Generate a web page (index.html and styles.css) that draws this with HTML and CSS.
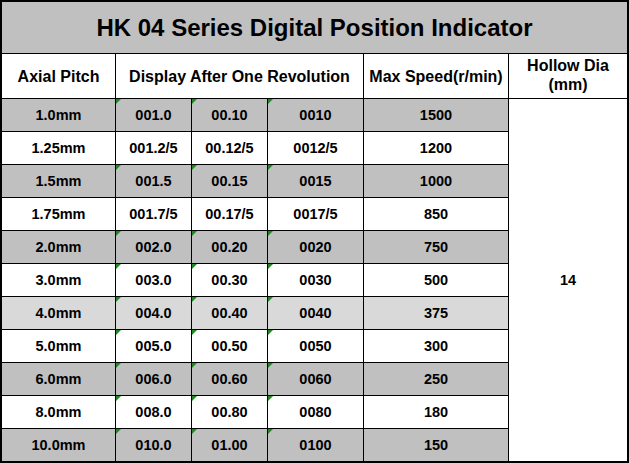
FILE: index.html
```html
<!DOCTYPE html>
<html>
<head>
<meta charset="utf-8">
<link rel="stylesheet" href="styles.css">
</head>
<body>
<div class="sheet">
  <div class="cell title">HK 04 Series Digital Position Indicator</div>

  <div class="cell head">Axial Pitch</div>
  <div class="cell head span3">Display After One Revolution</div>
  <div class="cell head">Max Speed(r/min)</div>
  <div class="cell head hollow-head">Hollow Dia<br>(mm)</div>

  <div class="cell gray">1.0mm</div>
  <div class="cell gray tri">001.0</div>
  <div class="cell gray tri">00.10</div>
  <div class="cell gray tri">0010</div>
  <div class="cell gray">1500</div>
  <div class="cell hollow">14</div>

  <div class="cell">1.25mm</div>
  <div class="cell">001.2/5</div>
  <div class="cell">00.12/5</div>
  <div class="cell">0012/5</div>
  <div class="cell">1200</div>

  <div class="cell gray">1.5mm</div>
  <div class="cell gray tri">001.5</div>
  <div class="cell gray tri">00.15</div>
  <div class="cell gray tri">0015</div>
  <div class="cell gray">1000</div>

  <div class="cell">1.75mm</div>
  <div class="cell">001.7/5</div>
  <div class="cell">00.17/5</div>
  <div class="cell">0017/5</div>
  <div class="cell">850</div>

  <div class="cell gray">2.0mm</div>
  <div class="cell gray tri">002.0</div>
  <div class="cell gray tri">00.20</div>
  <div class="cell gray tri">0020</div>
  <div class="cell gray">750</div>

  <div class="cell">3.0mm</div>
  <div class="cell tri">003.0</div>
  <div class="cell tri">00.30</div>
  <div class="cell tri">0030</div>
  <div class="cell">500</div>

  <div class="cell light">4.0mm</div>
  <div class="cell light tri">004.0</div>
  <div class="cell light tri">00.40</div>
  <div class="cell light tri">0040</div>
  <div class="cell light">375</div>

  <div class="cell">5.0mm</div>
  <div class="cell tri">005.0</div>
  <div class="cell tri">00.50</div>
  <div class="cell tri">0050</div>
  <div class="cell">300</div>

  <div class="cell gray">6.0mm</div>
  <div class="cell gray tri">006.0</div>
  <div class="cell gray tri">00.60</div>
  <div class="cell gray tri">0060</div>
  <div class="cell gray">250</div>

  <div class="cell">8.0mm</div>
  <div class="cell tri">008.0</div>
  <div class="cell tri">00.80</div>
  <div class="cell tri">0080</div>
  <div class="cell">180</div>

  <div class="cell gray">10.0mm</div>
  <div class="cell gray tri">010.0</div>
  <div class="cell gray tri">01.00</div>
  <div class="cell gray tri">0100</div>
  <div class="cell gray">150</div>
</div>
</body>
</html>
```

FILE: styles.css
```css
html, body {
  margin: 0;
  padding: 0;
  background: #ffffff;
}

.sheet {
  display: grid;
  grid-template-columns: 113px 75px 75px 95px 144px 118px;
  grid-template-rows: 51px 44px repeat(11, 32px);
  gap: 1px;
  background: #000000;
  border: 2px solid #000000;
  width: 625px;
  font-family: "Liberation Sans", Arial, sans-serif;
  font-weight: bold;
  color: #000000;
}

.cell {
  position: relative;
  background: #ffffff;
  display: flex;
  align-items: center;
  justify-content: center;
  text-align: center;
  font-size: 14.5px;
}

.title {
  grid-column: 1 / -1;
  background: #c0c0c0;
  font-size: 24px;
  padding-top: 1px;
}

.head {
  font-size: 16px;
  line-height: 19px;
}

.span3 {
  grid-column: span 3;
}

.hollow-head {
  align-items: flex-start;
  padding-top: 2px;
}

.hollow {
  grid-column: 6;
  grid-row: 3 / span 11;
}

.gray {
  background: #c0c0c0;
}

.light {
  background: #d9d9d9;
}

.tri::before {
  content: "";
  position: absolute;
  left: 0;
  top: 0;
  width: 0;
  height: 0;
  border-top: 5px solid #1f8a1f;
  border-right: 5px solid transparent;
}
```
